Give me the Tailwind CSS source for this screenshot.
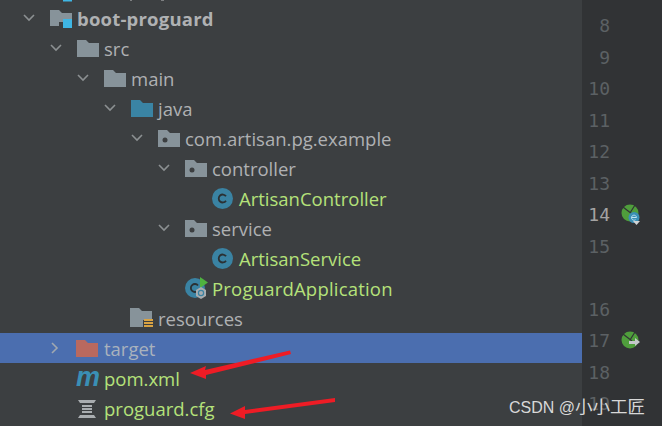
<!DOCTYPE html>
<html lang="en">
<head>
    <meta charset="UTF-8">
    <title>Project tree</title>
    <script src="https://cdn.jsdelivr.net/npm/@tailwindcss/browser@4"></script>
</head>
<body class="bg-[#3c3f41]">
<div class="relative flex w-[662px] h-[426px] overflow-hidden font-['Open_Sans','Noto_Sans',sans-serif] text-[18.5px]">

    <!-- project tree -->
    <div class="w-[582px] shrink-0 bg-[#3c3f41] text-[#afb1b3] [&_span]:pt-[2px]">
        <!-- bottom edge of the row scrolled off the top -->
        <svg class="block w-[582px] h-[3px]" viewBox="0 0 582 3"><rect x="63" width="9" height="1.500" fill="#3fb6e4"/><rect x="130" width="2" height="1" fill="#7d7f81"/><rect x="161" width="3" height="1" fill="#7d7f81"/></svg>

        <div class="h-[30px] flex items-center pl-[23px] font-bold tracking-[0.2px]">
            <svg class="w-[12px] h-[8px] mr-[15px]" viewBox="0 0 12 8" fill="none" stroke="#8c9092" stroke-width="1.6"><path d="M1 1l5 5 5-5"/></svg>
            <svg class="w-[22px] h-[20px] mr-[5px] mt-[2px]" viewBox="0 0 22 20"><path d="M0 1h9l3 3h10v13h-8v-4H9v4H0z" fill="#87939a"/><rect x="13" y="10" width="9" height="9" fill="#3fb6e4"/></svg>
            <span>boot-proguard</span>
        </div>
        <div class="h-[30px] flex items-center pl-[50px]">
            <svg class="w-[12px] h-[8px] mr-[15px]" viewBox="0 0 12 8" fill="none" stroke="#8c9092" stroke-width="1.6"><path d="M1 1l5 5 5-5"/></svg>
            <svg class="w-[22px] h-[18px] mr-[5px]" viewBox="0 0 22 18"><path d="M0 1h9l3 3h10v14H0z" fill="#87939a"/></svg>
            <span>src</span>
        </div>
        <div class="h-[30px] flex items-center pl-[77px]">
            <svg class="w-[12px] h-[8px] mr-[15px]" viewBox="0 0 12 8" fill="none" stroke="#8c9092" stroke-width="1.6"><path d="M1 1l5 5 5-5"/></svg>
            <svg class="w-[22px] h-[18px] mr-[5px]" viewBox="0 0 22 18"><path d="M0 1h9l3 3h10v14H0z" fill="#87939a"/></svg>
            <span>main</span>
        </div>
        <div class="h-[30px] flex items-center pl-[104px]">
            <svg class="w-[12px] h-[8px] mr-[15px]" viewBox="0 0 12 8" fill="none" stroke="#8c9092" stroke-width="1.6"><path d="M1 1l5 5 5-5"/></svg>
            <svg class="w-[22px] h-[18px] mr-[5px]" viewBox="0 0 22 18"><path d="M0 1h9l3 3h10v14H0z" fill="#3a84a4"/></svg>
            <span>java</span>
        </div>
        <div class="h-[30px] flex items-center pl-[131px]">
            <svg class="w-[12px] h-[8px] mr-[15px]" viewBox="0 0 12 8" fill="none" stroke="#8c9092" stroke-width="1.6"><path d="M1 1l5 5 5-5"/></svg>
            <svg class="w-[22px] h-[18px] mr-[5px]" viewBox="0 0 22 18"><path d="M0 1h9l3 3h10v14H0z" fill="#87939a"/><circle cx="7" cy="11" r="2.5" fill="#3c3f41"/></svg>
            <span>com.artisan.pg.example</span>
        </div>
        <div class="h-[30px] flex items-center pl-[158px]">
            <svg class="w-[12px] h-[8px] mr-[15px]" viewBox="0 0 12 8" fill="none" stroke="#8c9092" stroke-width="1.6"><path d="M1 1l5 5 5-5"/></svg>
            <svg class="w-[22px] h-[18px] mr-[5px]" viewBox="0 0 22 18"><path d="M0 1h9l3 3h10v14H0z" fill="#87939a"/><circle cx="7" cy="11" r="2.5" fill="#3c3f41"/></svg>
            <span>controller</span>
        </div>
        <div class="h-[30px] flex items-center pl-[212px] text-[#b5e27a]">
            <svg class="w-[21px] h-[21px] mr-[6px]" viewBox="0 0 21 21" fill="none"><circle cx="10.5" cy="10.5" r="10.5" fill="#3a83a3"/><path d="M14 8.2a4 4 0 1 0 0 4.6" stroke="#2b3134" stroke-width="1.8"/></svg>
            <span>ArtisanController</span>
        </div>
        <div class="h-[30px] flex items-center pl-[158px]">
            <svg class="w-[12px] h-[8px] mr-[15px]" viewBox="0 0 12 8" fill="none" stroke="#8c9092" stroke-width="1.6"><path d="M1 1l5 5 5-5"/></svg>
            <svg class="w-[22px] h-[18px] mr-[5px]" viewBox="0 0 22 18"><path d="M0 1h9l3 3h10v14H0z" fill="#87939a"/><circle cx="7" cy="11" r="2.5" fill="#3c3f41"/></svg>
            <span>service</span>
        </div>
        <div class="h-[30px] flex items-center pl-[212px] text-[#b5e27a]">
            <svg class="w-[21px] h-[21px] mr-[6px]" viewBox="0 0 21 21" fill="none"><circle cx="10.5" cy="10.5" r="10.5" fill="#3a83a3"/><path d="M14 8.2a4 4 0 1 0 0 4.6" stroke="#2b3134" stroke-width="1.8"/></svg>
            <span>ArtisanService</span>
        </div>
        <div class="h-[30px] flex items-center pl-[185px] text-[#b5e27a]">
            <svg class="w-[23px] h-[24px] mr-[4px]" viewBox="0 0 23 24" fill="none"><circle cx="10" cy="12" r="10" fill="#3a83a3"/><path d="M13 9.5a4 4 0 1 0 0 5" stroke="#2b3134" stroke-width="1.8"/><path d="M15 1l8 5.5-8 5.500z" fill="#4fb23f"/><path d="M16 11l5 3v6l-5 3-5-3v-6z" fill="#a9adb0"/><circle cx="16" cy="17" r="2.600" fill="none" stroke="#3a83a3" stroke-width="1.2"/></svg>
            <span class="tracking-[0.2px]">ProguardApplication</span>
        </div>
        <div class="h-[30px] flex items-center pl-[130px]">
            <svg class="w-[23px] h-[22px] mr-[5px]" viewBox="0 0 23 22"><path d="M0 1h9l3 3h10v9h-9v7H0z" fill="#87939a"/><path d="M14 12h9v2h-9zM14 15h9v2h-9zM14 18h9v2h-9z" fill="#d9a343"/></svg>
            <span>resources</span>
        </div>
        <div class="h-[30px] flex items-center pl-[50px] bg-[#4b6eaf] text-[#a9b2bd]">
            <svg class="w-[8px] h-[12px] mr-[17px] ml-[1px]" viewBox="0 0 8 12" fill="none" stroke="#a0a8b0" stroke-width="1.6"><path d="M1 1l5 5-5 5"/></svg>
            <svg class="w-[22px] h-[18px] mr-[6px]" viewBox="0 0 22 18"><path d="M0 1h9l3 3h10v14H0z" fill="#b9695f"/></svg>
            <span>target</span>
        </div>
        <div class="h-[30px] flex items-center pl-[76px] text-[#b5e27a]">
            <span class="w-[23px] mr-[5px] font-['Liberation_Sans',sans-serif] font-bold italic text-[27px] leading-none text-[#3a8fb5] -mt-[4px]">m</span>
            <span>pom.xml</span>
        </div>
        <div class="h-[30px] flex items-center pl-[78px] text-[#b5e27a]">
            <svg class="w-[18px] h-[18px] mr-[8px] mt-[2px]" viewBox="0 0 18 18" fill="#a9adb0"><path d="M0 0h18l-2 3H2zM4 5h10v2H4zM4 8h10v2H4zM4 11h10v2H4zM2 15h14l2 3H0z"/></svg>
            <span>proguard.cfg</span>
        </div>
    </div>

    <!-- editor gutter -->
    <div class="flex-1 bg-[#313335] text-[#5c6164] font-['DejaVu_Sans_Mono',monospace] text-[18px] leading-[31.5px] pt-[10px]">
        <div class="h-[31.5px] w-[28px] text-right">8</div>
        <div class="h-[31.5px] w-[28px] text-right">9</div>
        <div class="h-[31.5px] w-[28px] text-right">10</div>
        <div class="h-[31.5px] w-[28px] text-right">11</div>
        <div class="h-[31.5px] w-[28px] text-right">12</div>
        <div class="h-[31.5px] w-[28px] text-right">13</div>
        <div class="h-[31.5px] flex items-center">
            <span class="w-[28px] text-right text-[#a4a3a3]">14</span>
            <svg class="w-[20px] h-[21px] ml-[11px]" viewBox="0 0 20 21"><circle cx="9" cy="9" r="8.5" fill="#4f9e3c"/><path d="M2 3l9 7M14 1l-5 8" stroke="#313335" stroke-width="1.2"/><circle cx="13" cy="13.500" r="5.500" fill="#3a8fb5"/><path d="M10.500 13.500h5a2.500 2.500 0 1 0-1 2.200" fill="none" stroke="#bfe3f0" stroke-width="1"/><path d="M12 17h7l-3.500 4z" fill="#d0d3d5"/></svg>
        </div>
        <div class="h-[63px] w-[28px] text-right">15</div>
        <div class="h-[31.5px] w-[28px] text-right">16</div>
        <div class="h-[31.5px] flex items-center">
            <span class="w-[28px] text-right">17</span>
            <svg class="w-[20px] h-[20px] ml-[11px]" viewBox="0 0 20 20"><circle cx="9" cy="9" r="8.5" fill="#4f9e3c"/><path d="M2 3l9 7M14 1l-5 8" stroke="#313335" stroke-width="1.2"/><path d="M8 10h6V7l5 4-5 4v-2H8z" fill="#c4c8ca"/></svg>
        </div>
        <div class="h-[31.5px] w-[28px] text-right">18</div>
        <div class="h-[31.5px] w-[28px] text-right">19</div>
    </div>

    <!-- red arrows drawn over the screenshot -->
    <svg class="absolute left-0 top-0 w-[662px] h-[426px] pointer-events-none" viewBox="0 0 662 426" fill="#ee1c25">
        <path d="M190 373l16-7-1 4 85-19.500 1 3.500-85 21 0 4z"/>
        <path d="M230 413.500l15-7.500 0 4 90-12 0 4-90 12 0 5z"/>
    </svg>

    <!-- watermark -->
    <div class="absolute left-[509px] top-[396px] text-[16px] leading-[22px] text-[#d8d8d8] font-['Liberation_Sans','Noto_Sans_CJK_SC',sans-serif]">CSDN @<span class="text-[17.5px]">小小工匠</span></div>
</div>
</body>
</html>
